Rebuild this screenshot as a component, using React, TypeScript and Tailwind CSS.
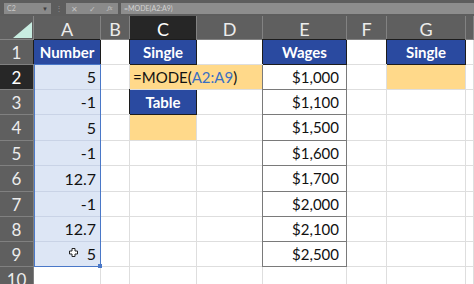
import React from "react";

const numbers = ["5", "-1", "5", "-1", "12.7", "-1", "12.7", "5"];
const wages = ["$1,000", "$1,100", "$1,500", "$1,600", "$1,700", "$2,000", "$2,100", "$2,500"];
const letters = ["A", "B", "C", "D", "E", "F", "G", ""];

const grid = "border-r border-b border-[#dedede]";
const blue =
  "bg-[#2a4aa0] text-white font-bold justify-center border-r border-b border-[#1c1c1c] shadow-[-1px_-1px_0_#1c1c1c]";
const yellow = "bg-[#ffd98a]";

function Cell({ r, c }: { r: number; c: number }) {
  if (c === 1) {
    if (r === 1) return <div className={`flex items-center ${blue}`}>Number</div>;
    if (r >= 2 && r <= 9)
      return (
        <div className="flex items-center justify-end pr-[4px] bg-[#dde6f5] border-r border-b border-[#c9d3e6] text-[#111] text-[16px]">
          {numbers[r - 2]}
        </div>
      );
    return <div className={grid} />;
  }
  if (c === 3) {
    if (r === 1) return <div className={`flex items-center ${blue}`}>Single</div>;
    if (r === 2)
      return (
        <div className={`relative z-10 flex items-center pl-[3px] whitespace-nowrap border-b border-[#dedede] ${yellow} text-[#111]`}>
          =MODE(<span className="text-[#3b70c2]">A2:A9</span>)
        </div>
      );
    if (r === 3) return <div className={`flex items-center ${blue}`}>Table</div>;
    if (r === 4) return <div className={`${yellow} ${grid}`} />;
    return <div className={grid} />;
  }
  if (c === 4) {
    if (r === 2) return <div className={`${yellow} ${grid}`} />;
    return <div className={grid} />;
  }
  if (c === 5) {
    if (r === 1) return <div className={`flex items-center ${blue}`}>Wages</div>;
    if (r >= 2 && r <= 9)
      return (
        <div className="flex items-center justify-end pr-[7px] bg-white border-r border-b border-[#7a7a7a] shadow-[-1px_0_0_#7a7a7a] text-[#111]">
          {wages[r - 2]}
        </div>
      );
    return <div className={grid} />;
  }
  if (c === 7) {
    if (r === 1) return <div className={`flex items-center ${blue}`}>Single</div>;
    if (r === 2) return <div className={`${yellow} ${grid}`} />;
    return <div className={grid} />;
  }
  return <div className={grid} />;
}

export default function App() {
  const rows = Array.from({ length: 10 }, (_, i) => i + 1);
  const cols = [1, 2, 3, 4, 5, 6, 7, 8];
  return (
    <div className="relative w-[474px] h-[284px] overflow-hidden bg-white font-['Lato','Noto_Sans',sans-serif] text-[15px] leading-none">
      {/* formula bar */}
      <div className="flex h-[16px] bg-[#5d5d5d] pt-[3px] pl-[4px]">
        <div className="flex h-[11px] w-[47px] items-center justify-between bg-[#8a8a8a] px-[3px] text-[7px] text-[#c9c9c9]">
          <span>C2</span>
          <span className="text-[6px] text-[#3f3f3f]">▼</span>
        </div>
        <div className="flex w-[15px] justify-center pt-[1px] text-[8px] leading-none text-[#8f8f8f]">⋮</div>
        <div className="flex h-[11px] w-[52px] items-center justify-around bg-[#8a8a8a] text-[8px] text-[#c2c2c2]">
          <span>✕</span>
          <span>✓</span>
          <span className="italic font-serif text-[7px]">fx</span>
        </div>
        <div className="ml-[3px] flex h-[11px] flex-1 items-center bg-[#8d8d8d] pl-[3px] text-[7px] text-[#d2d2d2]">
          =MODE(A2:A9)
        </div>
      </div>

      {/* sheet */}
      <div className="grid grid-cols-[34px_67px_29px_67px_66px_84px_40px_79px_8px] grid-rows-[24px_25px_25px_25px_26px_25px_26px_25px_25px_25px_25px]">
        <div className="relative bg-[#5f5f5f] border-r border-b border-[#858585]">
          <svg className="absolute left-0 top-0" width="34" height="24" viewBox="0 0 34 24">
            <polygon points="13,22 32,22 32,6" fill="#c8ede1" />
          </svg>
        </div>
        {letters.map((l, i) => (
          <div
            key={i}
            className={`flex items-center justify-center pt-[2px] border-r border-b border-[#828282] ${
              i === 2 ? "bg-[#262626] text-white" : "bg-[#5f5f5f] text-[#ececec]"
            } text-[18px]`}
          >
            {l}
          </div>
        ))}
        {rows.map((r) => (
          <React.Fragment key={r}>
            <div
              className={`flex items-center justify-center border-r border-b border-[#808080] text-[17px] ${
                r === 2 ? "bg-[#272727] text-white" : "bg-[#5f5f5f] text-[#ececec]"
              }`}
            >
              {r}
            </div>
            {cols.map((c) => (
              <Cell key={c} r={r} c={c} />
            ))}
          </React.Fragment>
        ))}
      </div>

      {/* formula reference range border A2:A9 */}
      <div className="pointer-events-none absolute left-[34px] top-[64px] h-[203px] w-[67px] border border-[#4a78c8]" />
      <div className="pointer-events-none absolute left-[98px] top-[264px] h-[4px] w-[4px] bg-[#4a78c8]" />

      {/* mouse cursor */}
      <svg className="pointer-events-none absolute left-[69px] top-[248px]" width="9" height="9" viewBox="0 0 9 9">
        <path d="M3 0.5h3v2.5h2.5v3H6v2.5H3V6H0.5V3H3z" fill="#fff" stroke="#222" strokeWidth="1" />
      </svg>
    </div>
  );
}
